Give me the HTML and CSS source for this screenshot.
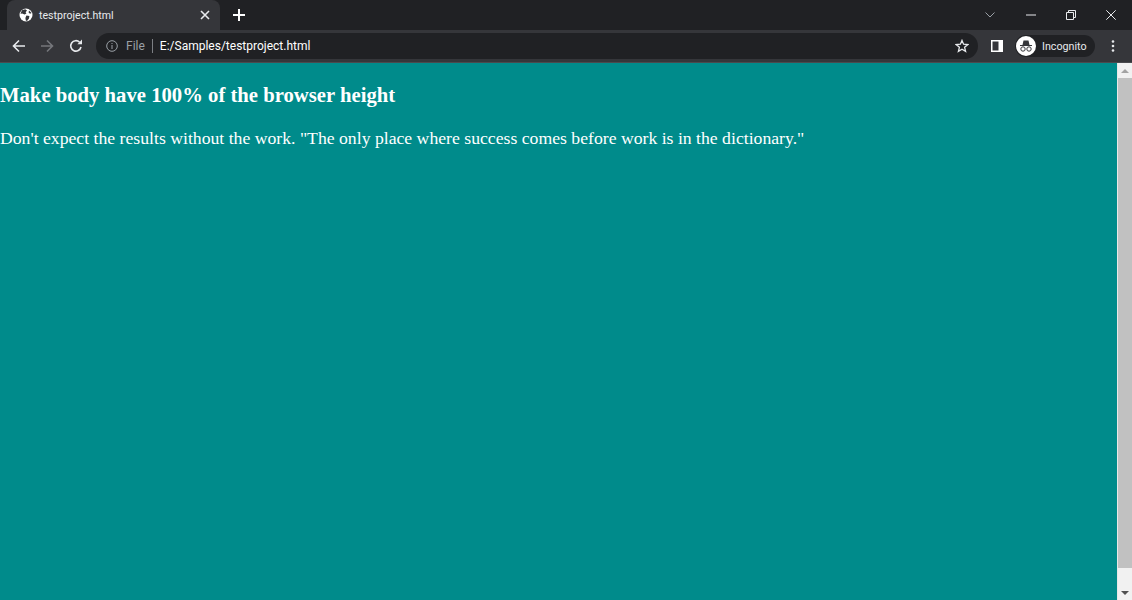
FILE: index.html
```html
<!DOCTYPE html>
<html lang="en">
<head>
  <meta charset="UTF-8">
  <title>testproject.html</title>
  <link rel="stylesheet" href="styles.css">
</head>
<body>
  <div class="tabstrip">
    <div class="tab">
      <svg class="favicon" viewBox="0 0 14 14" width="14" height="14">
        <circle cx="7" cy="7" r="6.5" fill="#fff"/>
        <path d="M3 2.2 L6.2 1.2 L8 2.6 L6.6 4.2 L7.4 5.4 L5.6 6.6 L3.2 5.4 L1.4 5.8 Z M7.4 7.4 L10.4 8 L10 10.6 L8 13 L6.8 12.6 L6.4 10 Z M10 2.6 L12.6 5 L11 5.8 L9.6 4.4 Z" fill="#35363a"/>
      </svg>
      <span class="tab-title">testproject.html</span>
      <svg class="tab-close" viewBox="0 0 10 10" width="10" height="10">
        <path d="M1 1 L9 9 M9 1 L1 9" stroke="#e8eaed" stroke-width="1.6"/>
      </svg>
    </div>
    <svg class="new-tab" viewBox="0 0 12 12" width="12" height="12">
      <path d="M6 0 V12 M0 6 H12" stroke="#fff" stroke-width="2"/>
    </svg>
    <div class="window-controls">
      <svg class="win-chevron" viewBox="0 0 10 6" width="10" height="6">
        <path d="M0.5 0.5 L5 5 L9.5 0.5" fill="none" stroke="#9aa0a6" stroke-width="1"/>
      </svg>
      <svg class="win-min" viewBox="0 0 10 2" width="10" height="2">
        <path d="M0 1 H10" stroke="#e8eaed" stroke-width="1"/>
      </svg>
      <svg class="win-restore" viewBox="0 0 10 10" width="10" height="10">
        <path d="M0.5 2.5 H7.5 V9.5 H0.5 Z M2.5 2.5 V0.5 H9.5 V7.5 H7.5" fill="none" stroke="#e8eaed" stroke-width="1"/>
      </svg>
      <svg class="win-close" viewBox="0 0 10 10" width="10" height="10">
        <path d="M0.3 0.3 L9.7 9.7 M9.7 0.3 L0.3 9.7" stroke="#e8eaed" stroke-width="1"/>
      </svg>
    </div>
  </div>

  <div class="toolbar">
    <svg class="nav-btn" viewBox="0 0 14 14" width="14" height="14">
      <path d="M13 7 H2 M7 1.5 L1.5 7 L7 12.5" fill="none" stroke="#e8eaed" stroke-width="1.6"/>
    </svg>
    <svg class="nav-btn" viewBox="0 0 14 14" width="14" height="14">
      <path d="M1 7 H12 M7 1.5 L12.5 7 L7 12.5" fill="none" stroke="#75777b" stroke-width="1.6"/>
    </svg>
    <svg class="nav-btn" viewBox="0 0 14 14" width="14" height="14">
      <path d="M12 8 A5.2 5.2 0 1 1 10.6 3.2" fill="none" stroke="#e8eaed" stroke-width="1.6"/>
      <path d="M8.4 5.2 H13 V0.6 Z" fill="#e8eaed"/>
    </svg>
    <div class="omnibox">
      <svg class="info-icon" viewBox="0 0 12 12" width="12" height="12">
        <circle cx="6" cy="6" r="5.3" fill="none" stroke="#9aa0a6" stroke-width="1"/>
        <path d="M6 5 V9 M6 3 V4" stroke="#9aa0a6" stroke-width="1"/>
      </svg>
      <span class="scheme">File</span>
      <span class="divider"></span>
      <span class="url">E:/Samples/testproject.html</span>
      <svg class="star" viewBox="0 0 14 14" width="14" height="14">
        <path d="M7 1.4 L8.6 5.2 L12.8 5.6 L9.6 8.3 L10.6 12.4 L7 10.2 L3.4 12.4 L4.4 8.3 L1.2 5.6 L5.4 5.2 Z" fill="none" stroke="#e8eaed" stroke-width="1.3"/>
      </svg>
    </div>
    <svg class="side-panel" viewBox="0 0 12 12" width="12" height="12">
      <path d="M0 0 H12 V12 H0 Z M1.5 1.5 V10.5 H7.5 V1.5 Z" fill="#fff" fill-rule="evenodd"/>
    </svg>
    <div class="profile">
      <span class="avatar">
        <svg viewBox="0 0 20 20" width="20" height="20">
          <circle cx="10" cy="10" r="10" fill="#fff"/>
          <path d="M4 9 H16 V10 H4 Z M6.5 9 L7.5 4.5 H12.5 L13.5 9 Z" fill="#35363a"/>
          <circle cx="7" cy="13" r="2.2" fill="none" stroke="#35363a" stroke-width="1"/>
          <circle cx="13" cy="13" r="2.2" fill="none" stroke="#35363a" stroke-width="1"/>
        </svg>
      </span>
      <span class="profile-name">Incognito</span>
    </div>
    <svg class="menu-dots" viewBox="0 0 4 12" width="4" height="12">
      <circle cx="2" cy="1.5" r="1.3" fill="#e8eaed"/>
      <circle cx="2" cy="6" r="1.3" fill="#e8eaed"/>
      <circle cx="2" cy="10.5" r="1.3" fill="#e8eaed"/>
    </svg>
  </div>

  <div class="viewport">
    <main class="page">
      <h2>Make body have 100% of the browser height</h2>
      <p>Don't expect the results without the work. "The only place where success comes before work is in the dictionary."</p>
    </main>
    <div class="scrollbar">
      <span class="arrow-up"></span>
      <span class="thumb"></span>
      <span class="arrow-down"></span>
    </div>
  </div>
</body>
</html>
```

FILE: styles.css
```css
html, body {
  height: 100%;
}

body {
  margin: 0;
  display: flex;
  flex-direction: column;
  overflow: hidden;
  background-color: #008b8b;
}

/* tab strip */
.tabstrip {
  height: 30px;
  flex: none;
  display: flex;
  align-items: center;
  background-color: #202124;
  font-family: Roboto, "Noto Sans", sans-serif;
}

.tab {
  width: 213px;
  height: 30px;
  margin-left: 7px;
  padding: 0 10px 0 12px;
  box-sizing: border-box;
  display: flex;
  align-items: center;
  background-color: #35363a;
  border-radius: 8px 8px 0 0;
}

.tab-title {
  flex: 1;
  margin-left: 6px;
  font-size: 10.6px;
  color: #e8eaed;
}

.new-tab {
  margin-left: 13px;
}

.window-controls {
  margin-left: auto;
  display: flex;
  align-items: center;
  padding-right: 16px;
  gap: 30px;
}

.win-chevron {
  margin-right: 1px;
}

/* toolbar */
.toolbar {
  height: 32px;
  flex: none;
  display: flex;
  align-items: center;
  padding-left: 12px;
  background-color: #35363a;
  border-bottom: 1px solid #4a4a4e;
}

.nav-btn {
  margin-right: 14px;
}

.nav-btn:nth-child(2) {
  margin-right: 15px;
}

.nav-btn:nth-child(3) {
  margin-right: 13px;
}

.omnibox {
  width: 882px;
  height: 26px;
  padding: 0 9px 0 10px;
  box-sizing: border-box;
  display: flex;
  align-items: center;
  background-color: #202124;
  border-radius: 13px;
  font-family: Roboto, "Noto Sans", sans-serif;
  font-size: 12px;
}

.scheme {
  margin-left: 8px;
  color: #9aa0a6;
}

.divider {
  width: 1px;
  height: 14px;
  margin: 0 7px;
  background-color: #7c7f84;
}

.url {
  flex: 1;
  color: #fff;
}

.side-panel {
  margin-left: 13px;
}

.profile {
  width: 80px;
  height: 22px;
  margin-left: 12px;
  display: flex;
  align-items: center;
  padding-left: 1px;
  box-sizing: border-box;
  background-color: #202124;
  border-radius: 11px;
  font-family: Roboto, "Noto Sans", sans-serif;
  font-size: 10.7px;
  color: #e8eaed;
}

.avatar {
  display: flex;
  margin-right: 6px;
}

.menu-dots {
  margin-left: 16px;
}

/* page */
.viewport {
  flex: 1;
  min-height: 0;
  display: flex;
}

.page {
  flex: 1;
  font-family: "Liberation Serif", serif;
  color: #fff;
}

.page h2 {
  margin: 20px 0 0;
  font-size: 20.7px;
  line-height: 24px;
}

.page p {
  margin: 21px 0 0;
  font-size: 17.7px;
  line-height: 21px;
}

.scrollbar {
  width: 15px;
  flex: none;
  display: flex;
  flex-direction: column;
  align-items: center;
  box-sizing: border-box;
  border-left: 1px solid #e8e8e8;
  background-color: #f1f1f1;
}

.arrow-up, .arrow-down {
  flex: none;
  width: 0;
  height: 0;
  margin: 6px 0 5px;
  border-left: 4px solid transparent;
  border-right: 4px solid transparent;
}

.arrow-up {
  border-bottom: 4px solid #a3a3a3;
}

.arrow-down {
  margin-top: auto;
  border-top: 4px solid #505050;
}

.thumb {
  height: 490px;
  width: 100%;
  background-color: #c1c1c1;
}
```
